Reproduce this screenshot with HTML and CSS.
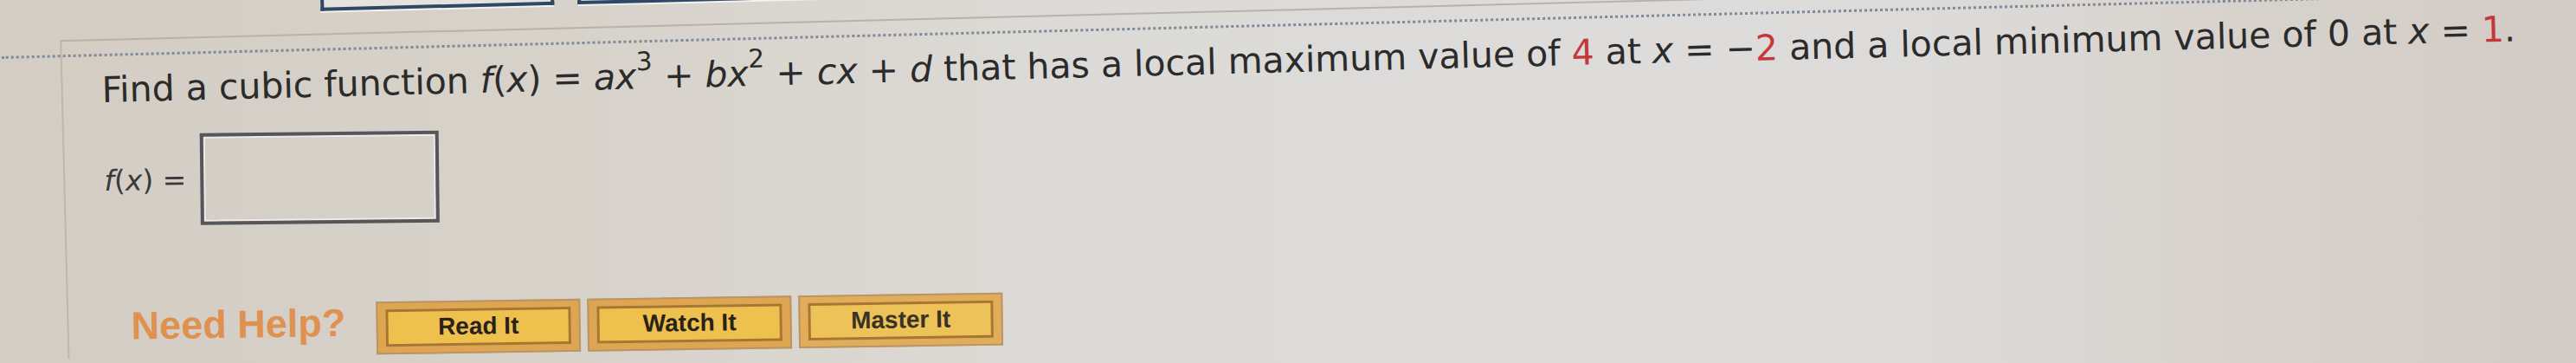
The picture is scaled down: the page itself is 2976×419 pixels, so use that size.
FILE: index.html
```html
<!DOCTYPE html>
<html lang="en">
<head>
<meta charset="utf-8">
<title>Cubic function question</title>
<link rel="stylesheet" href="styles.css">
</head>
<body>
<div class="page">
  <div class="prev-actions">
    <div class="prev-btn prev-btn-a"></div>
    <div class="prev-btn prev-btn-b"></div>
  </div>
  <div class="panel">
    <div class="dotted"></div>
    <p class="question">Find a cubic function <i>f</i>(<i>x</i>) = <i>ax</i><sup>3</sup> + <i>bx</i><sup>2</sup> + <i>cx</i> + <i>d</i> that has a local maximum value of <span class="red">4</span> at <i>x</i> = &minus;<span class="red">2</span> and a local minimum value of 0 at <i>x</i> = <span class="red">1</span>.</p>
    <div class="answer-row">
      <span class="answer-label"><i>f</i>(<i>x</i>) =</span>
      <div class="answer-box"></div>
    </div>
    <div class="help-row">
      <span class="need-help">Need Help?</span>
      <div class="help-buttons">
        <div class="help-btn"><span class="help-btn-inner">Read It</span></div>
        <div class="help-btn"><span class="help-btn-inner">Watch It</span></div>
        <div class="help-btn help-btn-faded"><span class="help-btn-inner">Master It</span></div>
      </div>
    </div>
  </div>
</div>
</body>
</html>
```
FILE: styles.css
```css
html, body {
  margin: 0;
  padding: 0;
}
body {
  width: 2976px;
  height: 419px;
  overflow: hidden;
  background: linear-gradient(90deg, #d3cdc4 0%, #d7d2ca 22%, #dcdad6 40%, #dddcdb 60%, #dcdbd9 75%, #d8d2cd 87%, #d2cbc5 100%);
  font-family: "DejaVu Sans", Verdana, sans-serif;
  color: #2b2b2b;
}
.page {
  width: 2900px;
  transform: rotate(-1.45deg);
  transform-origin: 0 0;
}
.prev-actions {
  display: flex;
  gap: 27px;
  padding-left: 370px;
  height: 24px;
}
.prev-btn {
  width: 262px;
  height: 18px;
  border: 4px solid #2f4865;
  border-top: none;
  background: #e4e3df;
  box-shadow: 0 2px 0 #f2f2ef;
}
.prev-btn-b {
  width: 600px;
}
.panel {
  margin-top: 24px;
  margin-left: 68px;
  border-top: 2px solid #b9b2a8;
  border-left: 2px solid #bdb7ae;
  padding-left: 45px;
  height: 366px;
}
.dotted {
  margin-left: -115px;
  margin-top: 15px;
  height: 0;
  border-top: 3px dotted #7f8a98;
}
.question {
  margin: 14px 0 0;
  font-size: 41px;
  line-height: 50px;
  white-space: nowrap;
}
.question sup {
  font-size: 0.72em;
  line-height: 0;
  vertical-align: 0.72em;
}
.red {
  color: #c4383c;
}
.answer-row {
  display: flex;
  align-items: center;
  gap: 16px;
  margin-top: 26px;
  transform: rotate(0.8deg);
  transform-origin: 0 50%;
}
.answer-label {
  font-size: 33px;
  color: #3a3a3a;
}
.answer-box {
  width: 268px;
  height: 98px;
  border: 4px solid #56565a;
  box-shadow: inset 0 0 0 2px #ecebe8;
}
.help-row {
  display: flex;
  align-items: center;
  margin-top: 90px;
  padding-left: 27px;
  transform: rotate(0.6deg);
  transform-origin: 0 50%;
}
.need-help {
  font-family: "Liberation Sans", Arial, sans-serif;
  font-weight: bold;
  font-size: 45px;
  color: #df9150;
  padding-bottom: 12px;
  width: 253px;
  margin-right: 30px;
}
.help-buttons {
  display: flex;
  gap: 8px;
}
.help-btn {
  width: 236px;
  height: 61px;
  box-sizing: border-box;
  border: 2px solid #b99466;
  background: #dea652;
  padding: 7px 9px;
  display: flex;
}
.help-btn-inner {
  flex: 1;
  border: 3px solid #a87634;
  background: #eec14f;
  display: flex;
  align-items: center;
  justify-content: center;
  font-family: "Liberation Sans", Arial, sans-serif;
  font-weight: bold;
  font-size: 28px;
  color: #2a2218;
}
.help-btn-faded .help-btn-inner {
  background: #ecc259;
  color: #3a3224;
}
.help-btn-faded {
  background: #e2ad5a;
}
```
